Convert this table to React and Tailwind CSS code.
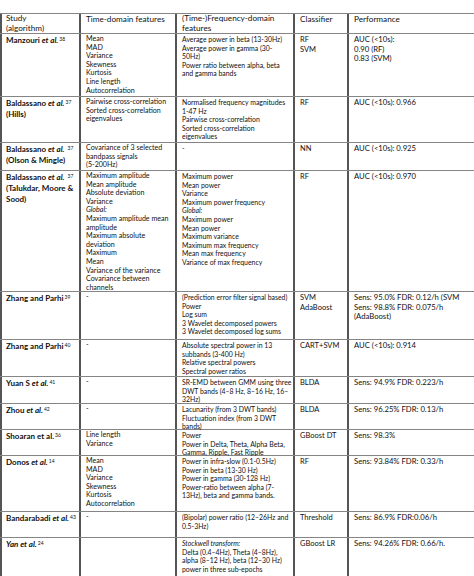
const Sup = ({ n }) => <sup className="text-[5px] font-normal ml-[1px]">{n}</sup>;
const I = ({ children }) => <i>{children}</i>;

const rows = [
  {
    h: "h-[63px]",
    study: [<>Manzouri <I>et al.</I><Sup n="38" /></>],
    time: ["Mean", "MAD", "Variance", "Skewness", "Kurtosis", "Line length", "Autocorrelation"],
    freq: ["Average power in beta (13-30Hz)", "Average power in gamma (30-", "50Hz)", "Power ratio between alpha, beta", "and gamma bands"],
    cls: ["RF", "SVM"],
    perf: ["AUC (<10s):", "0.90 (RF)", "0.83 (SVM)"],
  },
  {
    h: "h-[46px]",
    study: [<>Baldassano <I>et al.</I><Sup n="37" /></>, "(Hills)"],
    time: ["Pairwise cross-correlation", "Sorted cross-correlation", "eigenvalues"],
    freq: ["Normalised frequency magnitudes", "1-47 Hz", "Pairwise cross-correlation", "Sorted cross-correlation", "eigenvalues"],
    cls: ["RF"],
    perf: ["AUC (<10s): 0.966"],
  },
  {
    h: "h-[28px]",
    study: [<>Baldassano <I>et al.</I> <Sup n="37" /></>, "(Olson & Mingle)"],
    time: ["Covariance of 3 selected", "bandpass signals", "(5-200Hz)"],
    freq: ["-"],
    cls: ["NN"],
    perf: ["AUC (<10s): 0.925"],
  },
  {
    h: "h-[121px]",
    study: [<>Baldassano <I>et al.</I> <Sup n="37" /></>, "(Talukdar, Moore &", "Sood)"],
    time: ["Maximum amplitude", "Mean amplitude", "Absolute deviation", "Variance", <I>Global:</I>, "Maximum amplitude mean", "amplitude", "Maximum absolute", "deviation", "Maximum", "Mean", "Variance of the variance", "Covariance between", "channels"],
    freq: ["Maximum power", "Mean power", "Variance", "Maximum power frequency", <I>Global:</I>, "Maximum power", "Mean power", "Maximum variance", "Maximum max frequency", "Mean max frequency", "Variance of max frequency"],
    cls: ["RF"],
    perf: ["AUC (<10s): 0.970"],
  },
  {
    h: "h-[48px]",
    study: [<>Zhang and Parhi<Sup n="39" /></>],
    time: ["-"],
    freq: ["(Prediction error filter signal based)", "Power", "Log sum", "3 Wavelet decomposed powers", "3 Wavelet decomposed log sums"],
    cls: ["SVM", "AdaBoost"],
    perf: ["Sens: 95.0% FDR: 0.12/h (SVM", "Sens: 98.8% FDR: 0.075/h", "(AdaBoost)"],
  },
  {
    h: "h-[37px]",
    study: [<>Zhang and Parhi<Sup n="40" /></>],
    time: ["-"],
    freq: ["Absolute spectral power in 13", "subbands (3-400 Hz)", "Relative spectral powers", "Spectral power ratios"],
    cls: ["CART+SVM"],
    perf: ["AUC (<10s): 0.914"],
  },
  {
    h: "h-[27px]",
    study: [<>Yuan S <I>et al.</I><Sup n="41" /></>],
    time: ["-"],
    freq: ["SR-EMD between GMM using three", "DWT bands (4–8 Hz, 8–16 Hz, 16–", "32Hz)"],
    cls: ["BLDA"],
    perf: ["Sens: 94.9% FDR: 0.223/h"],
  },
  {
    h: "h-[26px]",
    study: [<>Zhou <I>et al.</I><Sup n="42" /></>],
    time: ["-"],
    freq: ["Lacunarity (from 3 DWT bands)", "Fluctuation index (from 3 DWT", "bands)"],
    cls: ["BLDA"],
    perf: ["Sens: 96.25% FDR: 0.13/h"],
  },
  {
    h: "h-[26px]",
    study: [<>Shoaran et al.<Sup n="36" /></>],
    time: ["Line length", "Variance"],
    freq: ["Power", "Power in Delta, Theta, Alpha Beta,", "Gamma, Ripple, Fast Ripple"],
    cls: ["GBoost DT"],
    perf: ["Sens: 98.3%"],
  },
  {
    h: "h-[56px]",
    study: [<>Donos <I>et al.</I><Sup n="14" /></>],
    time: ["Mean", "MAD", "Variance", "Skewness", "Kurtosis", "Autocorrelation"],
    freq: ["Power in infra-slow (0.1-0.5Hz)", "Power in beta (13-30 Hz)", "Power in gamma (30-128 Hz)", "Power-ratio between alpha (7-", "13Hz), beta and gamma bands."],
    cls: ["RF"],
    perf: ["Sens: 93.84% FDR: 0.33/h"],
  },
  {
    h: "h-[26px]",
    study: [<>Bandarabadi <I>et al.</I><Sup n="43" /></>],
    time: ["-"],
    freq: ["(Bipolar) power ratio (12–26Hz and", "0.5-3Hz)"],
    cls: ["Threshold"],
    perf: ["Sens: 86.9% FDR:0.06/h"],
  },
  {
    h: "h-[44px]",
    study: [<><I>Yan et al.</I><Sup n="24" /></>],
    time: [],
    freq: [<I>Stockwell transform:</I>, "Delta (0.4–4Hz), Theta (4–8Hz),", "alpha (8–12 Hz), beta (12–30 Hz)", "power in three sub-epochs"],
    cls: ["GBoost LR"],
    perf: ["Sens: 94.26% FDR: 0.66/h."],
  },
];

function Lines({ items, className }) {
  return (
    <div className={className}>
      {items.map((t, i) => (
        <div key={i} className="whitespace-nowrap">{t}</div>
      ))}
    </div>
  );
}

const col1 = "w-[81px] shrink-0 border-l-2 border-r-2 border-[#555] pl-[4px]";
const col2 = "w-[96px] shrink-0 border-r-2 border-[#555] pl-[5px]";
const col3 = "w-[118px] shrink-0 border-r-2 border-[#555] pl-[5px]";
const col4 = "w-[54px] shrink-0 border-r-2 border-[#555] pl-[5px]";
const col5 = "flex-1 pl-[5px]";

export default function App() {
  return (
    <div className="w-[474px] h-[576px] overflow-hidden bg-white text-[#111] font-['Lato',sans-serif]">
      <div className="pt-[13px]">
        <div className="border-t-[1.5px] border-[#858585]">
          {/* header */}
          <div className="flex h-[20px] border-b-[1.5px] border-[#858585] text-[8.2px] leading-[9.5px]">
            <Lines className={col1} items={["Study", "(algorithm)"]} />
            <Lines className={col2 + " pt-[1px]"} items={["Time-domain features"]} />
            <Lines className={col3} items={["(Time-)Frequency-domain", "features"]} />
            <Lines className={col4 + " pt-[1px]"} items={["Classifier"]} />
            <Lines className={col5 + " pt-[1px]"} items={["Performance"]} />
          </div>
          {rows.map((r, i) => (
            <div key={i} className={`flex ${r.h} border-b-[1.5px] border-[#858585]`}>
              <Lines className={col1 + " pt-[1px] font-bold text-[8px] leading-[11px]"} items={r.study} />
              <Lines className={col2 + " pt-[1px] text-[7.1px] leading-[8.6px]"} items={r.time} />
              <Lines className={col3 + " pt-[1px] text-[6.9px] leading-[8.6px]"} items={r.freq} />
              <Lines className={col4 + " pt-[1px] text-[7.5px] leading-[9.5px]"} items={r.cls} />
              <Lines className={col5 + " pt-[1px] text-[7.7px] leading-[9.5px]"} items={r.perf} />
            </div>
          ))}
        </div>
      </div>
    </div>
  );
}
